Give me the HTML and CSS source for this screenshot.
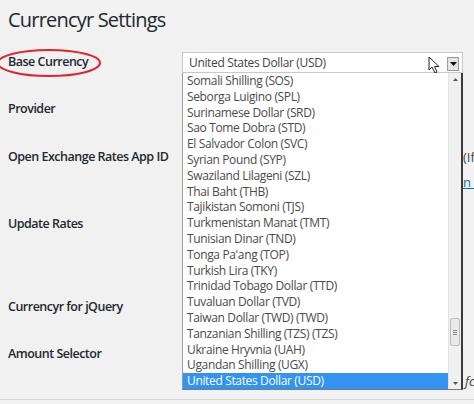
FILE: index.html
```html
<!DOCTYPE html>
<html>
<head>
<meta charset="utf-8">
<link rel="stylesheet" href="styles.css">
</head>
<body>
<div class="page">
  <h1 class="title">Currencyr Settings</h1>
  <div class="form">
    <div class="row r1">
      <div class="label">
        Base Currency
        <svg class="circle" width="110" height="32" viewBox="0 0 110 32"><ellipse cx="50" cy="15" rx="51" ry="13" fill="none" stroke="#e1262b" stroke-width="2"/></svg>
      </div>
      <div class="field">
        <div class="select">
          <span class="select-text">United States Dollar (USD)</span>
          <svg class="cursor" width="13" height="18" viewBox="0 0 13 18"><path d="M1 1 L1 14 L4 11 L7 17 L9 16 L6.5 10.5 L11 10.5 Z" fill="#fff" stroke="#222" stroke-width="1" stroke-linejoin="round"/></svg>
          <span class="select-btn"><svg width="7" height="4" viewBox="0 0 7 4"><path d="M0 0 H7 L3.5 4 Z" fill="#111"/></svg></span>
        </div>
        <div class="dropdown">
          <ul class="options">
            <li>Somali Shilling (SOS)</li>
            <li>Seborga Luigino (SPL)</li>
            <li>Surinamese Dollar (SRD)</li>
            <li>Sao Tome Dobra (STD)</li>
            <li>El Salvador Colon (SVC)</li>
            <li>Syrian Pound (SYP)</li>
            <li>Swaziland Lilageni (SZL)</li>
            <li>Thai Baht (THB)</li>
            <li>Tajikistan Somoni (TJS)</li>
            <li>Turkmenistan Manat (TMT)</li>
            <li>Tunisian Dinar (TND)</li>
            <li>Tonga Pa'ang (TOP)</li>
            <li>Turkish Lira (TKY)</li>
            <li>Trinidad Tobago Dollar (TTD)</li>
            <li>Tuvaluan Dollar (TVD)</li>
            <li>Taiwan Dollar (TWD) (TWD)</li>
            <li>Tanzanian Shilling (TZS) (TZS)</li>
            <li>Ukraine Hryvnia (UAH)</li>
            <li>Ugandan Shilling (UGX)</li>
            <li class="selected">United States Dollar (USD)</li>
          </ul>
          <div class="scrollbar">
            <span class="arrow"><svg width="5" height="3" viewBox="0 0 5 3"><path d="M0 3 H5 L2.5 0 Z" fill="#555"/></svg></span>
            <div class="track"><div class="thumb" style="margin-top:233px"><span class="grip"></span></div></div>
            <span class="arrow"><svg width="5" height="3" viewBox="0 0 5 3"><path d="M0 0 H5 L2.5 3 Z" fill="#555"/></svg></span>
          </div>
        </div>
      </div>
    </div>
    <div class="row r2">
      <div class="label">Provider</div>
      <div class="field"></div>
    </div>
    <div class="row r3">
      <div class="label">Open Exchange Rates App ID</div>
      <div class="field aside">
        <div class="note">(If</div>
        <div class="note link-line"><a href="#">n e</a></div>
      </div>
    </div>
    <div class="row r4">
      <div class="label">Update Rates</div>
      <div class="field"></div>
    </div>
    <div class="row r5">
      <div class="label">Currencyr for jQuery</div>
      <div class="field"></div>
    </div>
    <div class="row r6">
      <div class="label">Amount Selector</div>
      <div class="field aside">
        <div class="note italic">fc</div>
      </div>
    </div>
  </div>
</div>
</body>
</html>
```

FILE: styles.css
```css
html, body {
  margin: 0;
  padding: 0;
}
body {
  width: 474px;
  height: 404px;
  overflow: hidden;
  background: #f1f1f1;
  font-family: "Open Sans", "Liberation Sans", sans-serif;
  color: #23282d;
}
.page {
  height: 400px;
  border-bottom: 1px solid #d8d8d8;
  padding-left: 8px;
  box-sizing: border-box;
  overflow: hidden;
}
.title {
  margin: 5px 0 0 0;
  font-size: 20px;
  line-height: 30px;
  font-weight: 400;
  letter-spacing: -0.8px;
  color: #23282d;
}
.form {
  margin-top: 15px;
}
.row {
  display: flex;
}
.r1 { height: 47px; }
.r2 { height: 48px; }
.r3 { height: 67px; }
.r4 { height: 83px; }
.r5 { height: 47px; }
.r6 { height: 60px; }
.label {
  position: relative;
  width: 174px;
  flex: none;
  padding-top: 2px;
  font-size: 12.5px;
  line-height: 20px;
  font-weight: 600;
  letter-spacing: -0.5px;
  white-space: nowrap;
  color: #23282d;
}
.circle {
  position: absolute;
  left: -9px;
  top: -2px;
}
.field {
  position: relative;
  flex: 1;
  padding-top: 2px;
}
.select {
  position: relative;
  width: 281px;
  height: 21px;
  box-sizing: border-box;
  border: 1px solid #c9c9c9;
  background: #fff;
  display: flex;
  align-items: center;
  padding-left: 6px;
  font-size: 12px;
  letter-spacing: -0.35px;
  color: #444;
}
.select-text {
  flex: 1;
}
.cursor {
  position: absolute;
  left: 245px;
  top: 3px;
}
.select-btn {
  width: 12px;
  height: 14px;
  margin-right: 3px;
  margin-top: 2px;
  box-sizing: border-box;
  border: 1px solid #9a9a9a;
  background: #e4e4e4;
  display: flex;
  align-items: center;
  justify-content: center;
}
.dropdown {
  position: absolute;
  left: 0;
  top: 23px;
  width: 281px;
  height: 317px;
  box-sizing: border-box;
  background: #fff;
  border-left: 1px solid #9a9a9a;
  border-right: 2px solid #3a3a3a;
  border-bottom: 1px solid #7a7a7a;
  display: flex;
  z-index: 2;
}
.options {
  list-style: none;
  margin: 0;
  padding: 0;
  flex: 1;
}
.options li {
  height: 15.8px;
  line-height: 15.8px;
  padding-left: 4px;
  font-size: 12px;
  letter-spacing: -0.35px;
  color: #4a4a4a;
  white-space: nowrap;
}
.options li.selected {
  background: #3393f0;
  color: #fff;
}
.scrollbar {
  width: 12px;
  flex: none;
  background: #f0f0f0;
  border-left: 1px solid #e2e2e2;
  display: flex;
  flex-direction: column;
}
.arrow {
  height: 12px;
  display: flex;
  align-items: center;
  justify-content: center;
}
.track {
  flex: 1;
}
.thumb {
  height: 28px;
  margin-left: 1px;
  margin-right: 1px;
  box-sizing: border-box;
  border: 1px solid #bcbcbc;
  border-radius: 2px;
  background: #e9e9e9;
  display: flex;
  align-items: center;
  justify-content: center;
}
.grip {
  width: 4px;
  height: 5px;
  border-top: 1px solid #888;
  border-bottom: 1px solid #888;
  box-sizing: border-box;
  background: linear-gradient(#888, #888) center / 4px 1px no-repeat;
}
.aside {
  padding-left: 281px;
  box-sizing: border-box;
}
.note {
  font-size: 13px;
  line-height: 20px;
  color: #444;
  white-space: nowrap;
}
.link-line {
  margin-top: 5px;
}
.note a {
  color: #0073aa;
  text-decoration: underline;
}
.italic {
  margin-top: 27px;
  font-style: italic;
  padding-left: 2px;
}
```
